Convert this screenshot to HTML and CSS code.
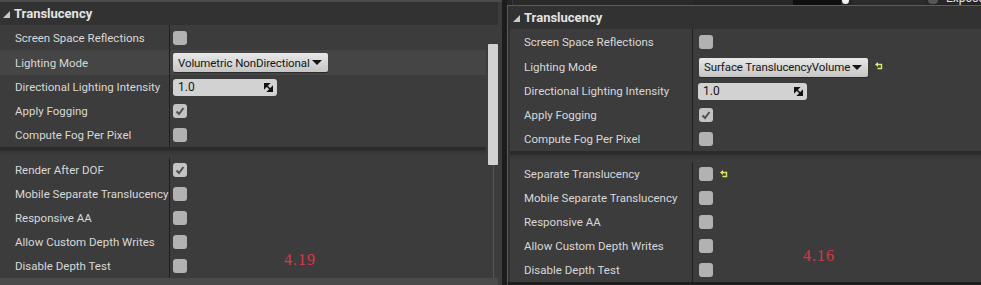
FILE: index.html
```html
<!doctype html>
<html>
  <head>
    <meta charset="utf-8">
    <title>Translucency 4.19 vs 4.16</title>
    <link rel="stylesheet" href="styles.css">
  </head>
  <body>
    <div class="screen">
      <section class="panel panel-419">
        <div class="cat-head"><span class="cat-arrow"></span>Translucency</div>
        <div class="panel-main">
          <div class="groups">
            <div class="group">
              <div class="row tall"><div class="name">Screen Space Reflections</div><div class="value"><span class="check"></span></div></div>
              <div class="row tall hover"><div class="name">Lighting Mode</div><div class="value"><span class="combo">Volumetric NonDirectional<i class="combo-arrow"></i></span></div></div>
              <div class="row"><div class="name">Directional Lighting Intensity</div><div class="value"><span class="spin">1.0<svg class="spin-icon" viewBox="0 0 9 9"><path d="M0.5 0.5H5L0.5 5Z M8.5 8.5H4L8.5 4Z M2 2L7 7" /></svg></span></div></div>
              <div class="row"><div class="name">Apply Fogging</div><div class="value"><span class="check on"></span></div></div>
              <div class="row"><div class="name">Compute Fog Per Pixel</div><div class="value"><span class="check"></span></div></div>
            </div>
            <div class="group-sep"></div>
            <div class="group">
              <div class="row"><div class="name">Render After DOF</div><div class="value"><span class="check on"></span></div></div>
              <div class="row"><div class="name">Mobile Separate Translucency</div><div class="value"><span class="check"></span></div></div>
              <div class="row"><div class="name">Responsive AA</div><div class="value"><span class="check"></span></div></div>
              <div class="row"><div class="name">Allow Custom Depth Writes</div><div class="value"><span class="check"></span></div></div>
              <div class="row"><div class="name">Disable Depth Test</div><div class="value"><span class="check"></span></div></div>
            </div>
          </div>
          <div class="scrollbar"><div class="thumb"></div><div class="track"></div></div>
        </div>
        <div class="panel-foot"></div>
        <span class="ver ver-419">4.19</span>
      </section>

      <div class="gutter"></div>

      <section class="panel panel-416">
        <div class="toolbar">
          <span class="tb tb-a"></span>
          <span class="tb tb-b"></span>
          <span class="tb tb-dot"></span>
          <span class="tb tb-c"></span>
          <span class="tb tb-circle"></span>
          <span class="tb-text">Exposure</span>
        </div>
        <div class="panel-inner">
          <div class="cat-head"><span class="cat-arrow"></span>Translucency</div>
          <div class="group">
            <div class="row tall"><div class="name">Screen Space Reflections</div><div class="value"><span class="check"></span></div></div>
            <div class="row tall"><div class="name">Lighting Mode</div><div class="value"><span class="combo">Surface TranslucencyVolume<i class="combo-arrow"></i></span><svg class="reset" viewBox="0 0 9 9"><path class="reset-line" d="M2.5 2.5H6.5V6.5H2.5" /><path class="reset-head" d="M0 2.5L3 0V5Z" /></svg></div></div>
            <div class="row"><div class="name">Directional Lighting Intensity</div><div class="value"><span class="spin">1.0<svg class="spin-icon" viewBox="0 0 9 9"><path d="M0.5 0.5H5L0.5 5Z M8.5 8.5H4L8.5 4Z M2 2L7 7" /></svg></span></div></div>
            <div class="row"><div class="name">Apply Fogging</div><div class="value"><span class="check on"></span></div></div>
            <div class="row"><div class="name">Compute Fog Per Pixel</div><div class="value"><span class="check"></span></div></div>
          </div>
          <div class="group-sep"></div>
          <div class="group">
            <div class="row"><div class="name">Separate Translucency</div><div class="value"><span class="check"></span><svg class="reset" viewBox="0 0 9 9"><path class="reset-line" d="M2.5 2.5H6.5V6.5H2.5" /><path class="reset-head" d="M0 2.5L3 0V5Z" /></svg></div></div>
            <div class="row"><div class="name">Mobile Separate Translucency</div><div class="value"><span class="check"></span></div></div>
            <div class="row"><div class="name">Responsive AA</div><div class="value"><span class="check"></span></div></div>
            <div class="row"><div class="name">Allow Custom Depth Writes</div><div class="value"><span class="check"></span></div></div>
            <div class="row"><div class="name">Disable Depth Test</div><div class="value"><span class="check"></span></div></div>
          </div>
        </div>
        <div class="panel-foot"></div>
        <span class="ver ver-416">4.16</span>
      </section>
    </div>
  </body>
</html>
```

FILE: styles.css
```css
html, body {
  margin: 0;
  padding: 0;
}

body {
  background: #1c1c1c;
  font-family: Roboto, "Liberation Sans", sans-serif;
  font-size: 12px;
  color: #d8d8d8;
}

.screen {
  display: flex;
  width: 981px;
  height: 285px;
  overflow: hidden;
}

.panel {
  position: relative;
  display: flex;
  flex-direction: column;
  background: #3c3c3c;
}

/* left panel: 4.19 */
.panel-419 {
  flex: none;
  width: 498px;
  padding-right: 4px;
  border-top: 2px solid #4b4b4b;
  --name-w: 170px;
  --value-pad: 3px;
}
.panel-main {
  display: flex;
}
.groups {
  flex: 1;
}
.scrollbar {
  width: 10px;
  padding-left: 2px;
  display: flex;
  flex-direction: column;
}
.thumb {
  height: 121px;
  margin-top: 19px;
  background: #d2d2d2;
  border-radius: 1px;
}
.track {
  flex: 1;
  width: 1px;
  margin-left: 5px;
  background: #565656;
}
.panel-419 .panel-foot {
  flex: 1;
  background: #4a4a4a;
}

.gutter {
  flex: none;
  width: 5px;
  background: #1c1c1c;
}

/* right panel: 4.16 */
.panel-416 {
  flex: 1;
  min-width: 0;
  background: #1e1e1e;
  --name-w: 183px;
  --value-pad: 6px;
}
.toolbar {
  height: 5px;
  display: flex;
  align-items: flex-start;
  background: #262626;
  border-bottom: 1px solid #5c5c5c;
  overflow: hidden;
}
.tb {
  flex: none;
  display: block;
  height: 5px;
}
.tb-a {
  width: 180px;
  border-left: 1px solid #3a3a3a;
  margin-left: 5px;
  background: #2a2a2a;
}
.tb-b {
  width: 48px;
  margin-left: 100px;
  background: #0e0e0e;
}
.tb-dot {
  width: 7px;
  height: 4px;
  margin-left: 1px;
  border-radius: 0 0 4px 4px;
  background: #f2f2f2;
}
.tb-c {
  width: 72px;
  margin-left: 4px;
  background: #2c2c2c;
}
.tb-circle {
  width: 10px;
  height: 4px;
  margin-left: 3px;
  border-radius: 0 0 5px 5px;
  background: #555;
}
.tb-text {
  flex: none;
  margin-left: 8px;
  margin-top: -9px;
  font-size: 12px;
  line-height: 14px;
  color: #e0e0e0;
}
.panel-inner {
  background: #3c3c3c;
  border-left: 1px solid #5a5a5a;
  padding-left: 2px;
  box-shadow: inset 2px 0 0 #303030;
}
.panel-416 .panel-foot {
  height: 3px;
  border-left: 1px solid #4a4a4a;
}

/* category header */
.cat-head {
  height: 23px;
  display: flex;
  align-items: center;
  background: #323232;
  font-size: 13px;
  font-weight: bold;
  color: #e4e4e4;
  padding-left: 3px;
}
.cat-arrow {
  width: 0;
  height: 0;
  margin-right: 4px;
  margin-top: 2px;
  border-left: 7px solid transparent;
  border-bottom: 7px solid #c8c8c8;
}

/* property rows */
.row {
  display: grid;
  grid-template-columns: var(--name-w) 1fr;
  height: 24px;
}
.row.tall {
  height: 25px;
}
.row.hover {
  background: #454545;
}
.name {
  display: flex;
  align-items: center;
  padding-left: 15px;
  border-right: 1px solid #1f1f1f;
  white-space: nowrap;
  font-size: 11.5px;
}
.panel-416 .name {
  padding-left: 14px;
}
.value {
  display: flex;
  align-items: center;
  padding-left: var(--value-pad);
}

.group-sep {
  height: 11px;
  background: linear-gradient(#2b2b2b 0, #2b2b2b 3px, #353535 4px, #3c3c3c 9px);
}

.check {
  display: block;
  width: 14px;
  height: 14px;
  border-radius: 3px;
  background: #b2b2b2;
}
.check.on {
  background: #c4c4c4 url("data:image/svg+xml,%3Csvg xmlns='http://www.w3.org/2000/svg' viewBox='0 0 14 14'%3E%3Cpath d='M3.5 7.5L6 10L10.5 4' fill='none' stroke='%23505050' stroke-width='2'/%3E%3C/svg%3E") center / 14px 14px no-repeat;
}

.combo {
  display: flex;
  align-items: center;
  height: 19px;
  padding: 0 6px 0 5px;
  border-radius: 2px;
  background: linear-gradient(#e8e8e8, #c6c6c6);
  box-shadow: 0 1px 0 #2a2a2a;
  color: #151515;
  font-size: 11.5px;
  letter-spacing: -0.1px;
  white-space: nowrap;
}
.combo-arrow {
  width: 0;
  height: 0;
  margin-left: 2px;
  border-left: 5px solid transparent;
  border-right: 5px solid transparent;
  border-top: 5px solid #151515;
}
.panel-416 .combo {
  margin-top: 1px;
}

.spin {
  display: flex;
  align-items: center;
  justify-content: space-between;
  box-sizing: border-box;
  width: 104px;
  height: 17px;
  padding: 0 4px 0 5px;
  border-radius: 3px;
  background: #d2d2d2;
  color: #151515;
  font-size: 12px;
}
.panel-416 .spin {
  width: 109px;
  margin-left: -1px;
}
.spin-icon {
  width: 9px;
  height: 9px;
  fill: #111;
  stroke: #111;
  stroke-width: 1.6;
}

.reset {
  width: 9px;
  height: 9px;
  margin-left: 7px;
  overflow: visible;
}
.reset-line {
  fill: none;
  stroke: #e4e66a;
  stroke-width: 1.4;
}
.reset-head {
  fill: #e4e66a;
}

/* version annotations on the screenshot */
.ver {
  position: absolute;
  font-family: "Liberation Serif", serif;
  font-size: 16px;
  letter-spacing: 1px;
  color: #d83848;
}
.ver-419 {
  left: 284px;
  top: 249px;
}
.ver-416 {
  left: 296px;
  top: 247px;
}
```
